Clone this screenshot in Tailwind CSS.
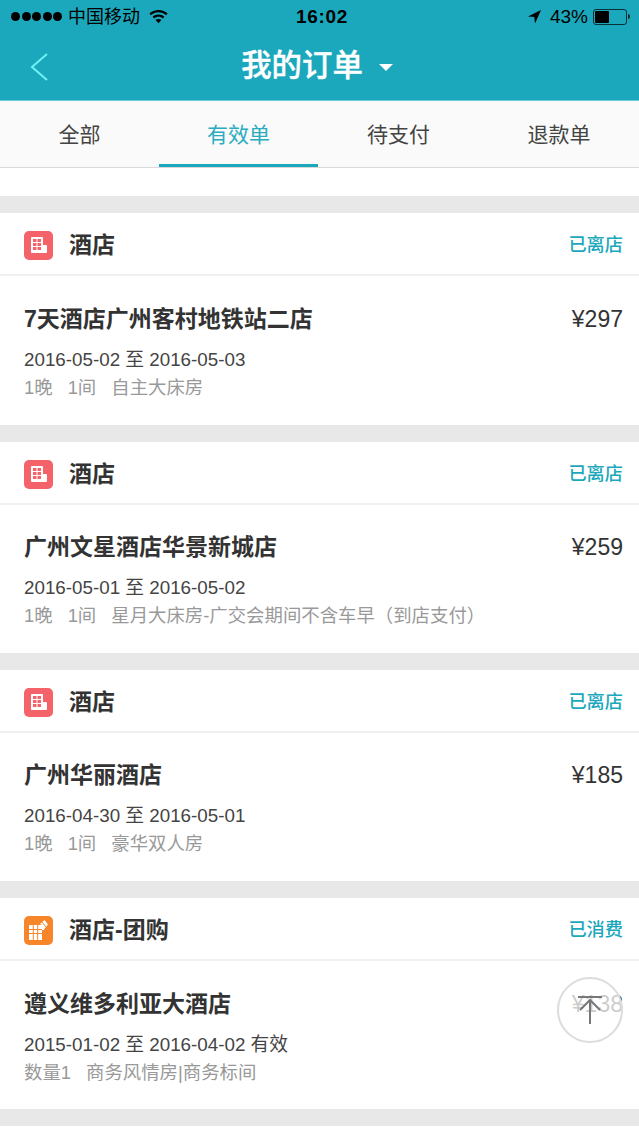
<!DOCTYPE html>
<html lang="zh">
<head>
<meta charset="utf-8">
<title>我的订单</title>
<script src="https://cdn.jsdelivr.net/npm/@tailwindcss/browser@4"></script>
</head>
<body class="bg-white font-['Liberation_Sans','Noto_Sans_CJK_SC',sans-serif]">
<div class="relative w-[639px] h-[1136px] overflow-hidden bg-white">

  <!-- header -->
  <div class="h-[101px] bg-[#1ca8bc] border-b border-[#6fcbd8]">
    <div class="flex items-center justify-between h-[33px] pl-[11px] pr-[9px] text-black">
      <div class="flex items-center">
        <div class="flex gap-[1.5px]">
          <span class="w-[9px] h-[9px] rounded-full bg-black"></span>
          <span class="w-[9px] h-[9px] rounded-full bg-black"></span>
          <span class="w-[9px] h-[9px] rounded-full bg-black"></span>
          <span class="w-[9px] h-[9px] rounded-full bg-black"></span>
          <span class="w-[9px] h-[9px] rounded-full bg-black"></span>
        </div>
        <span class="ml-[6px] text-[18px] leading-[22px]">中国移动</span>
        <svg class="ml-[9px]" width="19" height="14" viewBox="0 0 19 14"><path d="M9.5 0C6 0 2.8 1.3.4 3.6l1.5 1.6C4 3.2 6.6 2.2 9.5 2.2s5.500 1 7.600 3l1.500-1.600C16.200 1.300 13 0 9.500 0zm0 4.500c-2.300 0-4.400.9-5.900 2.300l1.500 1.600c1.200-1.100 2.700-1.700 4.400-1.700s3.200.6 4.400 1.700l1.500-1.600c-1.500-1.400-3.600-2.300-5.900-2.300zm0 4.400c-1.100 0-2.100.4-2.900 1.100l2.900 3.200 2.900-3.200c-.8-.7-1.800-1.100-2.900-1.100z" fill="#000"/></svg>
      </div>
      <span class="absolute left-[296px] text-[19px] leading-[22px] font-semibold tracking-[.7px]">16:02</span>
      <div class="flex items-center">
        <svg width="15" height="15" viewBox="0 0 15 15"><path d="M14 1 1 7.500l6.300.6.700 6.400z" fill="#000"/></svg>
        <span class="ml-[8px] text-[19px] leading-[22px]">43%</span>
        <div class="ml-[5px] flex items-center">
          <div class="w-[34px] h-[16px] rounded-[3px] border border-black/70 p-[1px]">
            <div class="w-[14px] h-full bg-black rounded-[1px]"></div>
          </div>
          <div class="ml-[1px] w-[2px] h-[5px] bg-black/70 rounded-r-sm"></div>
        </div>
      </div>
    </div>
    <div class="relative flex items-center justify-center h-[67px] pb-[3px]">
      <svg class="absolute left-[30px] top-[20px]" width="18" height="28" viewBox="0 0 18 28" fill="none"><path d="M17 1 2 14l15 13" stroke="#6ff1f5" stroke-width="2"/></svg>
      <div class="flex items-center ml-[-5px]">
        <span class="text-[30.4px] leading-[36px] font-medium text-white [-webkit-text-stroke:0.4px_white]">我的订单</span>
        <span class="ml-[16px] mt-[5px] w-0 h-0 border-x-[7px] border-x-transparent border-t-[7px] border-t-white"></span>
      </div>
    </div>
  </div>

  <!-- tabs -->
  <div class="flex h-[67px] bg-[#fafafa] border-b border-[#d9d9d9] text-[21px] text-[#444]">
    <div class="w-[159px] flex items-center justify-center pt-[1px]">全部</div>
    <div class="w-[159px] flex items-center justify-center pt-[4px] text-[#2aabbf] border-b-[3px] border-[#1ca8bc]">有效单</div>
    <div class="w-[161px] flex items-center justify-center pt-[1px]">待支付</div>
    <div class="w-[160px] flex items-center justify-center pt-[1px]">退款单</div>
  </div>

  <div class="h-[28px] bg-white"></div>

  <!-- order 1 -->
  <div class="h-[17px] bg-[#e8e8e8]"></div>
  <div class="flex items-center justify-between h-[63px] pt-[3px] pl-[24px] pr-[16px] border-b-2 border-[#f0f0f0]">
    <div class="flex items-center">
      <div class="flex items-center justify-center w-[29px] h-[29px] rounded-[5px] bg-[#f4636a]">
        <svg width="16" height="16" viewBox="0 0 16 16"><path d="M0 1a1 1 0 0 1 1-1h10a1 1 0 0 1 1 1v7h3a1 1 0 0 1 1 1v6a1 1 0 0 1-1 1H1a1 1 0 0 1-1-1z" fill="#fff"/><path d="M2 2h3.500v3H2zM6.500 2H10v3H6.500zM2 6h3.500v3H2zM6.500 6H10v3H6.500zM2 10h3.500v3H2zM6.500 10H10v3H6.500z" fill="#f4636a"/></svg>
      </div>
      <span class="ml-[16px] text-[23px] leading-[28px] font-semibold text-[#333]">酒店</span>
    </div>
    <span class="text-[18.200px] leading-[24px] font-medium text-[#1ca8bc]">已离店</span>
  </div>
  <div class="h-[149px] pl-[24px] pr-[16px] pt-[28px]">
    <div class="flex justify-between items-center h-[30px]">
      <span class="text-[23px] font-bold text-[#333]">7天酒店广州客村地铁站二店</span>
      <span class="text-[23px] text-[#333]">¥297</span>
    </div>
    <div class="mt-[13px] text-[18.800px] leading-[26px] text-[#444]">2016-05-02 至 2016-05-03</div>
    <div class="mt-[2px] flex gap-[15px] text-[18.400px] leading-[26px] text-[#999]"><span>1晚</span><span>1间</span><span>自主大床房</span></div>
  </div>

  <!-- order 2 -->
  <div class="h-[17px] bg-[#e8e8e8]"></div>
  <div class="flex items-center justify-between h-[63px] pt-[3px] pl-[24px] pr-[16px] border-b-2 border-[#f0f0f0]">
    <div class="flex items-center">
      <div class="flex items-center justify-center w-[29px] h-[29px] rounded-[5px] bg-[#f4636a]">
        <svg width="16" height="16" viewBox="0 0 16 16"><path d="M0 1a1 1 0 0 1 1-1h10a1 1 0 0 1 1 1v7h3a1 1 0 0 1 1 1v6a1 1 0 0 1-1 1H1a1 1 0 0 1-1-1z" fill="#fff"/><path d="M2 2h3.500v3H2zM6.500 2H10v3H6.500zM2 6h3.500v3H2zM6.500 6H10v3H6.500zM2 10h3.500v3H2zM6.500 10H10v3H6.500z" fill="#f4636a"/></svg>
      </div>
      <span class="ml-[16px] text-[23px] leading-[28px] font-semibold text-[#333]">酒店</span>
    </div>
    <span class="text-[18.200px] leading-[24px] font-medium text-[#1ca8bc]">已离店</span>
  </div>
  <div class="h-[148px] pl-[24px] pr-[16px] pt-[27px]">
    <div class="flex justify-between items-center h-[30px]">
      <span class="text-[23px] font-bold text-[#333]">广州文星酒店华景新城店</span>
      <span class="text-[23px] text-[#333]">¥259</span>
    </div>
    <div class="mt-[13px] text-[18.800px] leading-[26px] text-[#444]">2016-05-01 至 2016-05-02</div>
    <div class="mt-[2px] flex gap-[15px] text-[18.400px] leading-[26px] text-[#999]"><span>1晚</span><span>1间</span><span>星月大床房-广交会期间不含车早（到店支付）</span></div>
  </div>

  <!-- order 3 -->
  <div class="h-[17px] bg-[#e8e8e8]"></div>
  <div class="flex items-center justify-between h-[63px] pt-[3px] pl-[24px] pr-[16px] border-b-2 border-[#f0f0f0]">
    <div class="flex items-center">
      <div class="flex items-center justify-center w-[29px] h-[29px] rounded-[5px] bg-[#f4636a]">
        <svg width="16" height="16" viewBox="0 0 16 16"><path d="M0 1a1 1 0 0 1 1-1h10a1 1 0 0 1 1 1v7h3a1 1 0 0 1 1 1v6a1 1 0 0 1-1 1H1a1 1 0 0 1-1-1z" fill="#fff"/><path d="M2 2h3.500v3H2zM6.500 2H10v3H6.500zM2 6h3.500v3H2zM6.500 6H10v3H6.500zM2 10h3.500v3H2zM6.500 10H10v3H6.500z" fill="#f4636a"/></svg>
      </div>
      <span class="ml-[16px] text-[23px] leading-[28px] font-semibold text-[#333]">酒店</span>
    </div>
    <span class="text-[18.200px] leading-[24px] font-medium text-[#1ca8bc]">已离店</span>
  </div>
  <div class="h-[148px] pl-[24px] pr-[16px] pt-[27px]">
    <div class="flex justify-between items-center h-[30px]">
      <span class="text-[23px] font-bold text-[#333]">广州华丽酒店</span>
      <span class="text-[23px] text-[#333]">¥185</span>
    </div>
    <div class="mt-[13px] text-[18.800px] leading-[26px] text-[#444]">2016-04-30 至 2016-05-01</div>
    <div class="mt-[2px] flex gap-[15px] text-[18.400px] leading-[26px] text-[#999]"><span>1晚</span><span>1间</span><span>豪华双人房</span></div>
  </div>

  <!-- order 4 -->
  <div class="h-[17px] bg-[#e8e8e8]"></div>
  <div class="flex items-center justify-between h-[63px] pt-[3px] pl-[24px] pr-[16px] border-b-2 border-[#f0f0f0]">
    <div class="flex items-center">
      <div class="flex items-center justify-center w-[29px] h-[29px] rounded-[5px] bg-[#f7862a]">
        <svg width="19" height="20" viewBox="0 0 19 20"><path d="M0 6h13v15H0z" transform="translate(0 -1)" fill="#fff"/><path d="M0 9.500h13M0 13.500h13M4.300 5v15M8.700 5v15" stroke="#f7862a" stroke-width="1"/><path d="m11 4 4.500-4L19 4.500 14.500 10H13V5z" fill="#fff"/><path d="m13 2 4 5" stroke="#f7862a" stroke-width="1"/></svg>
      </div>
      <span class="ml-[16px] text-[23px] leading-[28px] font-semibold text-[#333]">酒店-团购</span>
    </div>
    <span class="text-[18.200px] leading-[24px] font-medium text-[#1ca8bc]">已消费</span>
  </div>
  <div class="h-[148px] pl-[24px] pr-[16px] pt-[28px]">
    <div class="flex justify-between items-center h-[30px]">
      <span class="text-[23px] font-bold text-[#333]">遵义维多利亚大酒店</span>
      <span class="text-[23px] text-[#333]">¥138</span>
    </div>
    <div class="mt-[13px] text-[18.800px] leading-[26px] text-[#444]">2015-01-02 至 2016-04-02 有效</div>
    <div class="mt-[2px] flex gap-[15px] text-[18.400px] leading-[26px] text-[#999]"><span>数量1</span><span>商务风情房|商务标间</span></div>
  </div>
  <div class="h-[17px] bg-[#e8e8e8]"></div>

  <!-- back to top -->
  <div class="absolute left-[557px] top-[977px] flex items-center justify-center w-[66px] h-[66px] rounded-full border-2 border-[#dcdcdc] bg-white/75">
    <svg width="24" height="28" viewBox="0 0 24 28" fill="none" stroke="#777" stroke-width="2"><path d="M0 1h24M12 28V5M2 14 12 4l10 10"/></svg>
  </div>
</div>
</body>
</html>
